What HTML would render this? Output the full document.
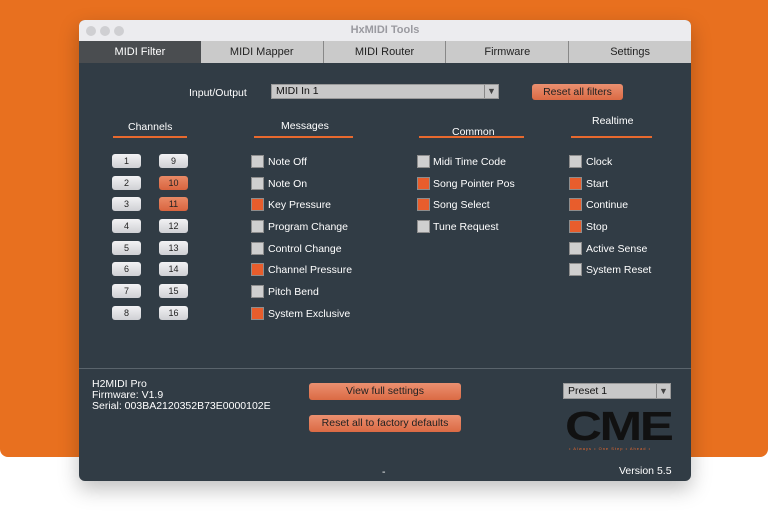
<!DOCTYPE html>
<html><head><style>
*{margin:0;padding:0;box-sizing:border-box}
body{width:768px;height:518px;background:#fff;position:relative;overflow:hidden;font-family:"Liberation Sans",sans-serif}
.bg{position:absolute;left:0;top:0;width:768px;height:457px;background:#e8701f;border-radius:0 0 8px 8px}
.win{position:absolute;left:79px;top:20px;width:612px;height:461px;background:#313c45;border-radius:6px;overflow:hidden;box-shadow:0 8px 20px rgba(0,0,0,.25)}
.title{height:21px;background:#ececef;text-align:center;font-size:11px;color:#9a9aa0;line-height:21px;font-weight:bold;position:relative}
.dot{position:absolute;top:6px;width:10px;height:10px;border-radius:50%;background:#cfcfd2}
.tabs{display:flex;height:22px;background:#cacaca}
.tab{flex:1;text-align:center;font-size:11px;line-height:22px;color:#222;border-left:1px solid #888}
.tab.a{background:#4a4d50;color:#fff;border:none}
.t{position:absolute;color:#fff;font-size:10.5px}
.ul{position:absolute;height:2px;background:#e8692e}
.cb{position:absolute;width:29px;height:14px;border-radius:3px;background:linear-gradient(#f2f2f4,#cfd0d4);font-size:9px;text-align:center;line-height:14px;color:#222}
.cb.o{background:linear-gradient(#e98a66,#d9643f)}
.ck{position:absolute;width:13px;height:13px;background:#8d8d8d;padding:1px}
.ck i{display:block;width:11px;height:11px;background:#cfcfcf}
.ck.o i{background:#e85d2c}
.lb{position:absolute;color:#fff;font-size:10.5px}
.btn{position:absolute;border-radius:3px;background:linear-gradient(#eb9070,#db6a44);color:#222;font-size:10.5px;text-align:center}
.sel{position:absolute;background:#c8c8c8;font-size:10.5px;color:#111;border:1px solid #999}
.sel b{position:absolute;right:0;top:0;bottom:0;width:14px;border-left:1px solid #888;text-align:center;font-size:9px;color:#444}
</style></head><body>
<div class="bg"></div>
<div class="win">
<div class="title"><span class="dot" style="left:7px"></span><span class="dot" style="left:21px"></span><span class="dot" style="left:35px"></span>HxMIDI Tools</div>
<div class="tabs"><div class="tab a">MIDI Filter</div><div class="tab" style="border:none">MIDI Mapper</div><div class="tab">MIDI Router</div><div class="tab">Firmware</div><div class="tab">Settings</div></div>
</div>
<div class="t" style="left:189px;top:87px">Input/Output</div>
<div class="sel" style="left:271px;top:84px;width:228px;height:15px;line-height:13px;padding-left:4px">MIDI In 1<b>▼</b></div>
<div class="btn" style="left:532px;top:84px;width:91px;height:16px;line-height:16px">Reset all filters</div>
<div class="t" style="left:128px;top:121px">Channels</div><div class="ul" style="left:113px;top:136px;width:74px"></div>
<div class="t" style="left:281px;top:120px">Messages</div><div class="ul" style="left:254px;top:136px;width:99px"></div>
<div class="t" style="left:452px;top:126px">Common</div><div class="ul" style="left:419px;top:136px;width:105px"></div>
<div class="t" style="left:592px;top:115px">Realtime</div><div class="ul" style="left:571px;top:136px;width:81px"></div>

<div class="cb" style="left:112px;top:154px">1</div><div class="cb" style="left:159px;top:154px">9</div>
<div class="cb" style="left:112px;top:176px">2</div><div class="cb o" style="left:159px;top:176px">10</div>
<div class="cb" style="left:112px;top:197px">3</div><div class="cb o" style="left:159px;top:197px">11</div>
<div class="cb" style="left:112px;top:219px">4</div><div class="cb" style="left:159px;top:219px">12</div>
<div class="cb" style="left:112px;top:241px">5</div><div class="cb" style="left:159px;top:241px">13</div>
<div class="cb" style="left:112px;top:262px">6</div><div class="cb" style="left:159px;top:262px">14</div>
<div class="cb" style="left:112px;top:284px">7</div><div class="cb" style="left:159px;top:284px">15</div>
<div class="cb" style="left:112px;top:306px">8</div><div class="cb" style="left:159px;top:306px">16</div>

<div class="ck" style="left:251px;top:155px"><i></i></div><div class="lb" style="left:268px;top:156px">Note Off</div>
<div class="ck" style="left:251px;top:177px"><i></i></div><div class="lb" style="left:268px;top:178px">Note On</div>
<div class="ck o" style="left:251px;top:198px"><i></i></div><div class="lb" style="left:268px;top:199px">Key Pressure</div>
<div class="ck" style="left:251px;top:220px"><i></i></div><div class="lb" style="left:268px;top:221px">Program Change</div>
<div class="ck" style="left:251px;top:242px"><i></i></div><div class="lb" style="left:268px;top:243px">Control Change</div>
<div class="ck o" style="left:251px;top:263px"><i></i></div><div class="lb" style="left:268px;top:264px">Channel Pressure</div>
<div class="ck" style="left:251px;top:285px"><i></i></div><div class="lb" style="left:268px;top:286px">Pitch Bend</div>
<div class="ck o" style="left:251px;top:307px"><i></i></div><div class="lb" style="left:268px;top:308px">System Exclusive</div>

<div class="ck" style="left:417px;top:155px"><i></i></div><div class="lb" style="left:433px;top:156px">Midi Time Code</div>
<div class="ck o" style="left:417px;top:177px"><i></i></div><div class="lb" style="left:433px;top:178px">Song Pointer Pos</div>
<div class="ck o" style="left:417px;top:198px"><i></i></div><div class="lb" style="left:433px;top:199px">Song Select</div>
<div class="ck" style="left:417px;top:220px"><i></i></div><div class="lb" style="left:433px;top:221px">Tune Request</div>

<div class="ck" style="left:569px;top:155px"><i></i></div><div class="lb" style="left:586px;top:156px">Clock</div>
<div class="ck o" style="left:569px;top:177px"><i></i></div><div class="lb" style="left:586px;top:178px">Start</div>
<div class="ck o" style="left:569px;top:198px"><i></i></div><div class="lb" style="left:586px;top:199px">Continue</div>
<div class="ck o" style="left:569px;top:220px"><i></i></div><div class="lb" style="left:586px;top:221px">Stop</div>
<div class="ck" style="left:569px;top:242px"><i></i></div><div class="lb" style="left:586px;top:243px">Active Sense</div>
<div class="ck" style="left:569px;top:263px"><i></i></div><div class="lb" style="left:586px;top:264px">System Reset</div>

<div style="position:absolute;left:79px;top:368px;width:612px;height:1px;background:#5a646c"></div>
<div class="lb" style="left:92px;top:379px;line-height:11px">H2MIDI Pro<br>Firmware: V1.9<br>Serial: 003BA2120352B73E0000102E</div>
<div class="btn" style="left:309px;top:383px;width:152px;height:17px;line-height:17px">View full settings</div>
<div class="btn" style="left:309px;top:415px;width:152px;height:17px;line-height:17px">Reset all to factory defaults</div>
<div class="sel" style="left:563px;top:383px;width:108px;height:16px;line-height:14px;padding-left:4px">Preset 1<b>▼</b></div>
<div style="position:absolute;left:565px;top:406px;font:bold 41px/41px 'Liberation Sans',sans-serif;color:#111;letter-spacing:-2px;transform:scaleX(1.25);transform-origin:left">CME</div>
<div style="position:absolute;left:569px;top:446px;font-size:4px;color:#e8692e;letter-spacing:1px">• Always • One Step • Ahead •</div>
<div class="lb" style="left:382px;top:466px">-</div>
<div class="lb" style="left:619px;top:465px">Version 5.5</div>
</body></html>
